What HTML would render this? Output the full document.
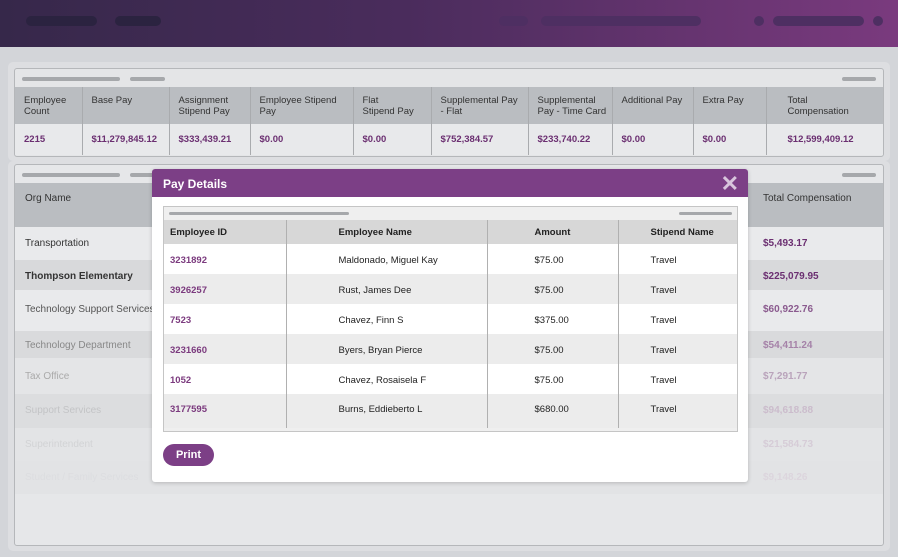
<!DOCTYPE html>
<html><head><style>
*{box-sizing:border-box;margin:0;padding:0}
body{width:898px;height:557px;overflow:hidden;background:#d3d5d9;font-family:"Liberation Sans",sans-serif;font-size:10px;color:#333;position:relative}
.hdr{position:absolute;left:0;top:0;width:898px;height:47px;background:linear-gradient(90deg,#36284a,#4a2c5c 45%,#7a3a7e)}
.pill{position:absolute;height:10px;border-radius:5px;background:#2b2340}
.p2{background:#4e2f62}
.card{position:absolute;left:8px;width:882px;background:#dddee1;border-radius:5px}
.box{position:absolute;left:6px;width:870px;border:1px solid #b5b7ba;background:#e4e5e7;border-radius:3px;overflow:hidden}
.gp{position:absolute;height:4px;border-radius:2px;background:#a6a8ab}
table{border-collapse:collapse}
.t1{table-layout:fixed;width:870px}
.t1 td{border-right:1px solid #a9abae;vertical-align:top;padding:8px 0 0 9px;font-size:9.5px;line-height:11px;white-space:nowrap;overflow:hidden}
.t1 .h td{background:#babdc1;height:37px;color:#333}
.t1 .d td{background:#e8e9eb;height:31px;color:#6b2f71;font-weight:bold;padding-top:10px}
.row{position:absolute;left:0;width:870px;padding-left:10px;font-size:10px}
.tc{position:absolute;left:748px;font-weight:bold;color:#6b2f71}
.modal{position:absolute;left:152px;top:169px;width:596px;height:313px;background:#fff;border-radius:3px;box-shadow:0 1px 4px rgba(0,0,0,.2)}
.mh{height:28px;background:#7c3f86;color:#fff;font-weight:bold;font-size:12px;padding:8px 11px;border-radius:3px 3px 0 0;position:relative}
.mt{position:absolute;left:11px;top:37px;width:575px;height:226px;border:1px solid #c5c5c5;background:#efefef}
.mt table{position:absolute;top:13px;left:0;width:573px;table-layout:fixed}
.mt td{border-right:1px solid #b0b0b0;font-size:9.5px;padding:0 6px;color:#222}
.mt td:last-child{border-right:none}
.mt .h td{background:#d7d7d7;font-weight:bold;height:24px}
.mt .r td{height:30px;padding-top:3px}
.mt .w td{background:#fff}.mt .g td{background:#ececec}
.mt td.id{color:#7b3a7e;font-weight:bold}
.btn{position:absolute;left:11px;top:275px;width:51px;height:22px;border-radius:11px;background:#7c3f86;color:#fff;font-weight:bold;font-size:11px;text-align:center;line-height:22px}
</style></head><body>
<div class="hdr">
<div class="pill" style="left:26px;top:16px;width:71px"></div>
<div class="pill" style="left:115px;top:16px;width:46px"></div>
<div class="pill p2" style="left:499px;top:16px;width:29px"></div>
<div class="pill p2" style="left:541px;top:16px;width:160px"></div>
<div class="pill p2" style="left:754px;top:16px;width:10px"></div>
<div class="pill p2" style="left:773px;top:16px;width:91px"></div>
<div class="pill p2" style="left:873px;top:16px;width:10px"></div>
</div>

<div class="card" style="top:62px;height:99px">
<div class="box" style="top:6px;height:89px">
<div class="gp" style="left:7px;top:8px;width:98px"></div>
<div class="gp" style="left:115px;top:8px;width:35px"></div>
<div class="gp" style="left:827px;top:8px;width:34px"></div>
<table class="t1" style="position:absolute;top:18px;left:0">
<colgroup><col style="width:67px"><col style="width:87px"><col style="width:81px"><col style="width:103px"><col style="width:78px"><col style="width:97px"><col style="width:84px"><col style="width:81px"><col style="width:73px"><col style="width:119px"></colgroup>
<tr class="h"><td>Employee<br>Count</td><td>Base Pay</td><td>Assignment<br>Stipend Pay</td><td>Employee Stipend<br>Pay</td><td>Flat<br>Stipend Pay</td><td>Supplemental Pay<br>- Flat</td><td>Supplemental<br>Pay - Time Card</td><td>Additional Pay</td><td>Extra Pay</td><td style="border-right:none;padding-left:21px">Total<br>Compensation</td></tr>
<tr class="d"><td>2215</td><td>$11,279,845.12</td><td>$333,439.21</td><td>$0.00</td><td>$0.00</td><td>$752,384.57</td><td>$233,740.22</td><td>$0.00</td><td>$0.00</td><td style="border-right:none;padding-left:21px">$12,599,409.12</td></tr>
</table>
</div></div>

<div class="card" style="top:161px;height:390px">
<div class="box" style="top:3px;height:382px;background:#e6e7e9">
<div class="gp" style="left:7px;top:8px;width:98px"></div>
<div class="gp" style="left:115px;top:8px;width:35px"></div>
<div class="gp" style="left:827px;top:8px;width:34px"></div>
<div class="row" style="top:18px;height:44px;background:#babdc1;padding-top:10px">Org Name<span style="position:absolute;left:748px">Total Compensation</span></div>
<div class="row" style="top:62px;height:33px;background:#e9eaec;padding-top:11px">Transportation<span class="tc" style="top:11px">$5,493.17</span></div>
<div class="row" style="top:95px;height:30px;background:#d8d9db;padding-top:11px;font-weight:bold;color:#333">Thompson Elementary<span class="tc" style="top:11px">$225,079.95</span></div>
<div class="row" style="top:125px;height:41px;background:#e9eaec;padding-top:14px;color:#555">Technology Support Services<span class="tc" style="top:14px;color:#8a5a8e">$60,922.76</span></div>
<div class="row" style="top:166px;height:27px;background:#d9dadc;padding-top:9px;color:#888">Technology Department<span class="tc" style="top:9px;color:#a582a8">$54,411.24</span></div>
<div class="row" style="top:193px;height:36px;background:#e4e5e7;padding-top:13px;color:#aaa">Tax Office<span class="tc" style="top:13px;color:#b9a3bb">$7,291.77</span></div>
<div class="row" style="top:229px;height:34px;background:#dcdddf;padding-top:11px;color:#c3c4c6">Support Services<span class="tc" style="top:11px;color:#cbbccc">$94,618.88</span></div>
<div class="row" style="top:263px;height:33px;background:#e3e4e6;padding-top:11px;color:#d2d3d5">Superintendent<span class="tc" style="top:11px;color:#d6ccd7">$21,584.73</span></div>
<div class="row" style="top:296px;height:33px;background:#e2e3e5;padding-top:11px;color:#dcdde0">Student / Family Services<span class="tc" style="top:11px;color:#dcd5dd">$9,148.26</span></div>
</div></div>

<div class="modal">
<div class="mh">Pay Details<span style="position:absolute;right:9px;top:2px;font-size:22px;color:#d8c4dc;font-weight:bold">✕</span></div>
<div class="mt">
<div class="gp" style="left:5px;top:5px;width:180px;height:3px"></div>
<div class="gp" style="left:515px;top:5px;width:53px;height:3px"></div>
<table>
<colgroup><col style="width:122px"><col style="width:201px"><col style="width:131px"><col></colgroup>
<tr class="h"><td>Employee ID</td><td style="padding-left:52px">Employee Name</td><td style="padding-left:47px">Amount</td><td style="padding-left:32px">Stipend Name</td></tr>
<tr class="r w"><td class="id">3231892</td><td style="padding-left:52px">Maldonado, Miguel Kay</td><td style="padding-left:47px">$75.00</td><td style="padding-left:32px">Travel</td></tr>
<tr class="r g"><td class="id">3926257</td><td style="padding-left:52px">Rust, James Dee</td><td style="padding-left:47px">$75.00</td><td style="padding-left:32px">Travel</td></tr>
<tr class="r w"><td class="id">7523</td><td style="padding-left:52px">Chavez, Finn S</td><td style="padding-left:47px">$375.00</td><td style="padding-left:32px">Travel</td></tr>
<tr class="r g"><td class="id">3231660</td><td style="padding-left:52px">Byers, Bryan Pierce</td><td style="padding-left:47px">$75.00</td><td style="padding-left:32px">Travel</td></tr>
<tr class="r w"><td class="id">1052</td><td style="padding-left:52px">Chavez, Rosaisela F</td><td style="padding-left:47px">$75.00</td><td style="padding-left:32px">Travel</td></tr>
<tr class="r g"><td class="id" style="height:34px;padding-bottom:6px">3177595</td><td style="padding-left:52px;padding-bottom:6px">Burns, Eddieberto L</td><td style="padding-left:47px;padding-bottom:6px">$680.00</td><td style="padding-left:32px;padding-bottom:6px">Travel</td></tr>
</table>
</div>
<div class="btn">Print</div>
</div>
</body></html>
